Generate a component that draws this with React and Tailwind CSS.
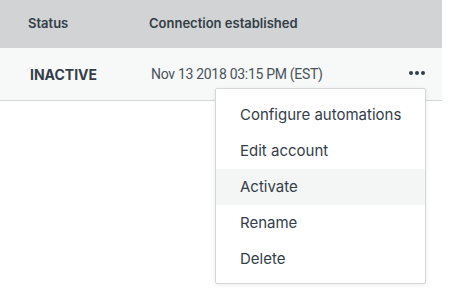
import { useState } from "react";

const items = ["Configure automations", "Edit account", "Activate", "Rename", "Delete"];

const App = () => {
    const [hovered, setHovered] = useState("Activate");

    return (
        <div className="w-[450px] h-[300px] bg-white overflow-hidden text-[#333e48]" style={{ fontFamily: "Inter, 'Noto Sans', sans-serif" }}>
            <div className="w-[442px]">
                <div className="h-[48px] bg-[#d1d3d4] flex items-center text-[13px] font-semibold">
                    <div className="w-[149px] pl-[28px]">Status</div>
                    <div>Connection established</div>
                </div>
                <div className="relative h-[53px] bg-[#f7f8f8] border-b border-[#d4d6d7] flex items-center">
                    <div className="w-[151px] pl-[30px] text-[14px] font-bold">INACTIVE</div>
                    <div className="text-[14px] tracking-[-0.3px] text-[#4a535b] font-['Roboto',sans-serif]">Nov 13 2018 03:15 PM (EST)</div>
                    <div className="ml-auto mr-[17px] flex gap-[2px] mb-[2px]">
                        <span className="w-[4px] h-[4px] rounded-full bg-[#333e48]" />
                        <span className="w-[4px] h-[4px] rounded-full bg-[#333e48]" />
                        <span className="w-[4px] h-[4px] rounded-full bg-[#333e48]" />
                    </div>
                    <ul className="absolute left-[215px] top-[40px] w-[211px] pt-[8px] pb-[6px] bg-white border border-[#d4d6d7] rounded-[2px] shadow-[0_1px_4px_rgba(0,0,0,0.08)] z-10">
                        {items.map((item) => (
                            <li
                                key={item}
                                onMouseEnter={() => setHovered(item)}
                                className={`h-[36px] flex items-center pl-[24px] text-[15px] text-[#333e48] ${hovered === item ? "bg-[#f4f5f5]" : ""}`}
                            >
                                {item}
                            </li>
                        ))}
                    </ul>
                </div>
            </div>
        </div>
    );
};

export default App;
